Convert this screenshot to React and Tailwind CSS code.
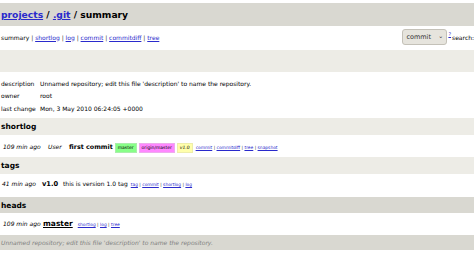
import React from "react";

const link = "text-[#2a2acc] underline";

function Sep() {
  return <span className="text-[#333]"> | </span>;
}

function LinkList({ items, className = "" }) {
  return (
    <span className={`whitespace-nowrap ${className}`}>
      {items.map((it, i) => (
        <React.Fragment key={it}>
          {i > 0 && <Sep />}
          <a className={link}>{it}</a>
        </React.Fragment>
      ))}
    </span>
  );
}

function Band({ children, dark, h = "h-[17px]" }) {
  return (
    <div
      className={`flex items-center font-bold text-[7.5px] text-black pl-[1px] ${h} ${
        dark ? "bg-[#d9d8d1]" : "bg-[#edece6]"
      }`}
    >
      {children}
    </div>
  );
}

const badge = "border px-[2px] text-[4.5px] leading-[8px] mr-[2px] whitespace-nowrap";

export default function App() {
  return (
    <div className="w-[474px] h-[253px] overflow-hidden bg-white text-[6px] leading-[9px] text-black font-['DejaVu_Sans',sans-serif] whitespace-nowrap">
      <div className="h-[3px]" />
      <div className="h-[23px] bg-[#d9d8d1] flex items-center pl-[1px] text-[9.2px] font-bold">
        <a className={link}>projects</a>
        <span>&nbsp;/&nbsp;</span>
        <a className={link}>.git</a>
        <span>&nbsp;/ summary</span>
      </div>
      <div className="h-[22px] flex items-center justify-between">
        <div className="pl-[1px]">
          <span>summary</span>
          <Sep />
          <LinkList items={["shortlog", "log", "commit", "commitdiff", "tree"]} />
        </div>
        <div className="flex items-center">
          <div className="w-[45px] h-[16px] bg-[#e6e4dd] border border-[#c4c1b8] rounded-[3px] flex items-center justify-between px-[3px] text-[6.5px] text-[#333]">
            <span>commit</span>
            <span className="text-[6px] leading-none -mt-[2px]">⌄</span>
          </div>
          <span className="self-start mt-[1px] ml-[1px] text-[5px] text-[#2a2acc] underline">?</span>
          <span className="ml-[1px]">search:</span>
        </div>
      </div>
      <div className="h-[2px]" />
      <div className="h-[22px] bg-[#edece6]" />
      <div className="pt-[5px] h-[46px]">
        <div className="flex h-[12.5px] items-center">
          <span className="w-[40px] pl-[1px]">description</span>
          <span>Unnamed repository; edit this file 'description' to name the repository.</span>
        </div>
        <div className="flex h-[12.5px] items-center">
          <span className="w-[40px] pl-[1px]">owner</span>
          <span>root</span>
        </div>
        <div className="flex h-[12.5px] items-center">
          <span className="w-[40px] pl-[1px]">last change</span>
          <span>Mon, 3 May 2010 06:24:05 +0000</span>
        </div>
      </div>
      <Band>shortlog</Band>
      <div className="h-[22px] flex items-baseline pt-[7px] pl-[3px]">
        <span className="italic w-[45px]">109 min ago</span>
        <span className="italic w-[21px]">User</span>
        <span className="font-bold text-[6.4px] mr-[2px]">first commit</span>
        <span className={`${badge} bg-[#88ff88] border-[#aaeeaa]`}>master</span>
        <span className={`${badge} bg-[#ff88ff] border-[#eeaaee]`}>origin/master</span>
        <span className={`${badge} bg-[#ffffab] border-[#eeeeaa] italic mr-[3px]`}>v1.0</span>
        <LinkList className="text-[4.4px]" items={["commit", "commitdiff", "tree", "snapshot"]} />
      </div>
      <Band>tags</Band>
      <div className="h-[23px] flex items-baseline pt-[5px] pl-[2px]">
        <span className="italic w-[40px]">41 min ago</span>
        <span className="font-bold text-[6.7px] w-[21px]">v1.0</span>
        <span className="mr-[3px]">this is version 1.0 tag</span>
        <LinkList className="text-[4.4px]" items={["tag", "commit", "shortlog", "log"]} />
      </div>
      <Band dark h="h-[16px]">heads</Band>
      <div className="h-[22px] flex items-baseline pt-[6px] pl-[3px]">
        <span className="italic w-[40px]">109 min ago</span>
        <span className="font-bold text-[7.5px] underline mr-[5px]">master</span>
        <LinkList className="text-[4.4px]" items={["shortlog", "log", "tree"]} />
      </div>
      <div className="h-[15px] bg-[#d9d8d1] flex items-center pl-[1px] italic text-[#808080]">
        Unnamed repository; edit this file 'description' to name the repository.
      </div>
    </div>
  );
}
